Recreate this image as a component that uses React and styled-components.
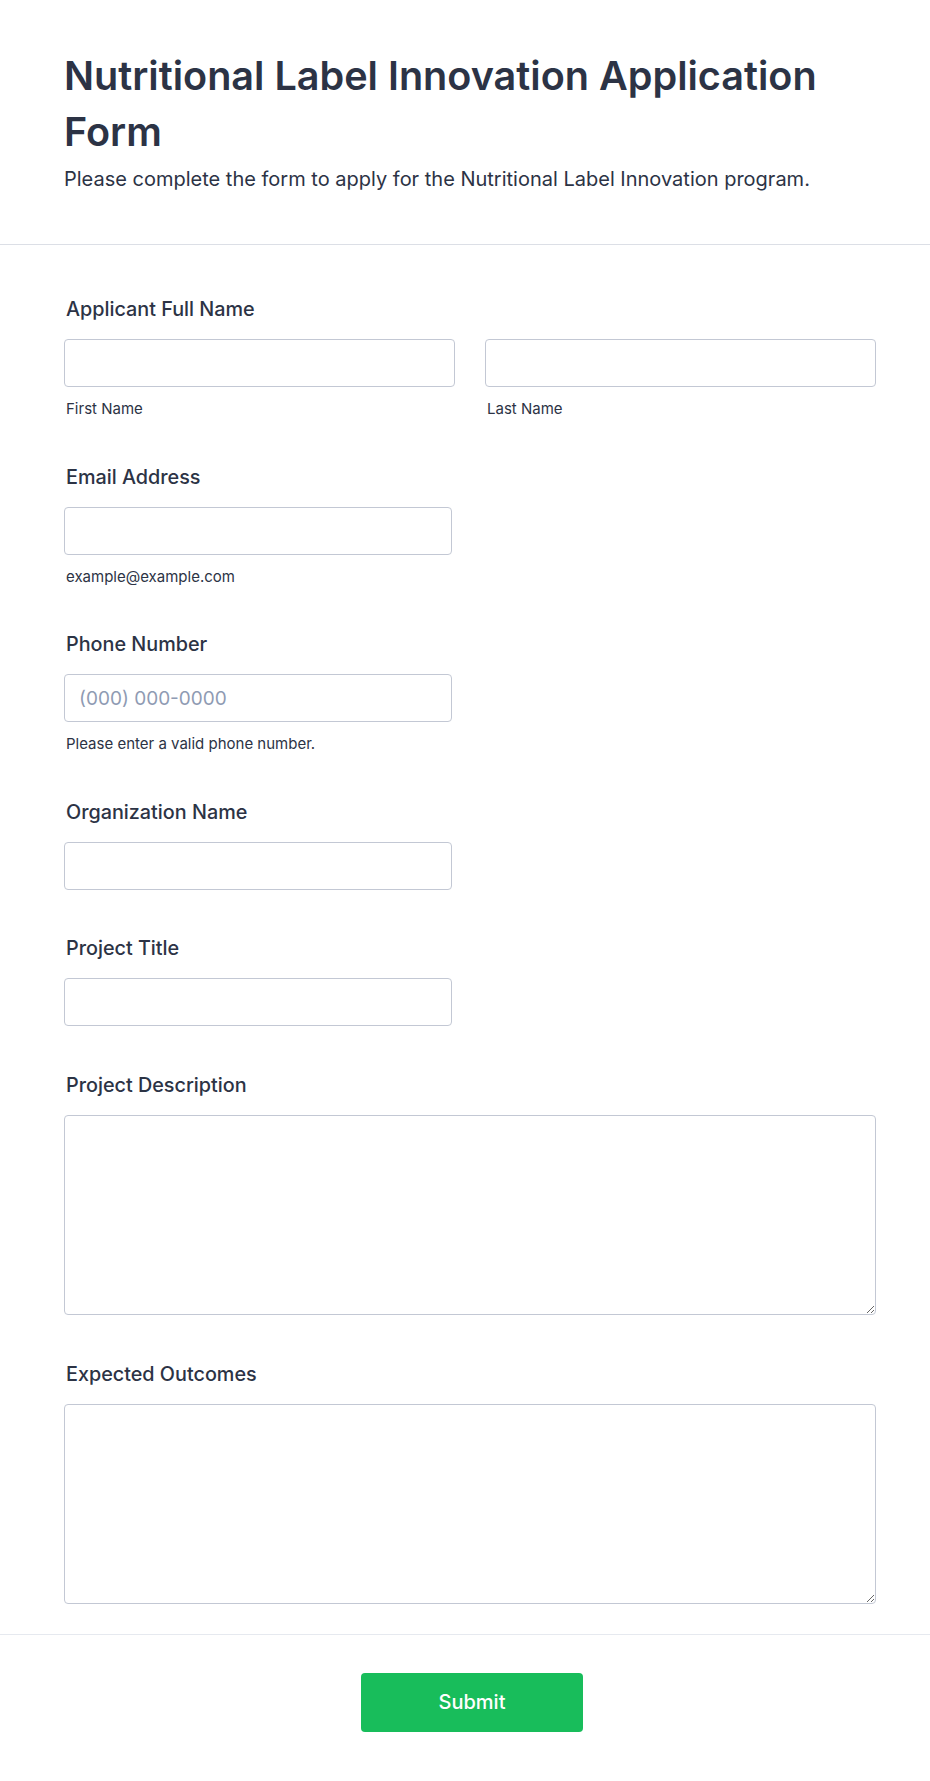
import React from "react";
import styled, { createGlobalStyle } from "styled-components";

const GlobalStyle = createGlobalStyle`
  * { box-sizing: border-box; }
  html, body { margin: 0; padding: 0; background: #ffffff; }
  body { font-family: Inter, "Noto Sans", sans-serif; color: #2c3345; }
`;

const Page = styled.div`
  width: 930px;
  background: #ffffff;
`;

const Header = styled.header`
  padding: 48px 54px 50px 64px;
  border-bottom: 1px solid #dcdfe6;
`;

const Title = styled.h1`
  margin: 0;
  font-size: 39.6px;
  line-height: 56px;
  font-weight: 600;
  color: #2c3345;
`;

const Subtitle = styled.p`
  margin: 4px 0 0;
  font-size: 20px;
  line-height: 30px;
  font-weight: 400;
  color: #2c3345;
`;

const Body = styled.main`
  padding: 50px 54px 30px 64px;
  display: flex;
  flex-direction: column;
  gap: 44.6px;
`;

const Field = styled.div`
  display: flex;
  flex-direction: column;
`;

const Label = styled.label`
  font-size: 19.8px;
  line-height: 28px;
  font-weight: 500;
  color: #2c3345;
  padding-left: 2px;
  margin-bottom: 16px;
`;

const Row = styled.div`
  display: grid;
  grid-template-columns: ${(p) => (p.$cols === 2 ? "1fr 1fr" : "388px")};
  column-gap: 30px;
`;

const Cell = styled.div`
  display: flex;
  flex-direction: column;
`;

const Input = styled.input`
  height: 48px;
  width: 100%;
  border: 1px solid #c3c8d4;
  border-radius: 4px;
  padding: 0 14px;
  font-family: Inter, "Noto Sans", sans-serif;
  font-size: 19px;
  color: #2c3345;
  background: #ffffff;
  outline: none;
  &::placeholder { color: #8f9bb3; }
`;

const TextArea = styled.textarea`
  height: 200px;
  width: 100%;
  border: 1px solid #c3c8d4;
  border-radius: 4px;
  padding: 10px 14px;
  font-family: Inter, "Noto Sans", sans-serif;
  font-size: 19px;
  color: #2c3345;
  background: #ffffff;
  outline: none;
  resize: vertical;
  display: block;
`;

const SubLabel = styled.span`
  margin-top: 13px;
  font-size: 15px;
  line-height: 18px;
  color: #2c3345;
  padding-left: 2px;
`;

const Footer = styled.footer`
  border-top: 1px solid #e6e9ef;
  padding: 38px 54px 50px 68px;
  display: flex;
  justify-content: center;
`;

const SubmitButton = styled.button`
  width: 222px;
  height: 59px;
  border: none;
  border-radius: 4px;
  background: #18bd5b;
  color: #ffffff;
  font-family: Inter, "Noto Sans", sans-serif;
  font-size: 20px;
  font-weight: 500;
  cursor: pointer;
`;

function SingleField({ label, sub, placeholder }) {
  return (
    <Field>
      <Label>{label}</Label>
      <Row $cols={1}>
        <Cell>
          <Input placeholder={placeholder} />
          {sub && <SubLabel>{sub}</SubLabel>}
        </Cell>
      </Row>
    </Field>
  );
}

function AreaField({ label }) {
  return (
    <Field>
      <Label>{label}</Label>
      <TextArea />
    </Field>
  );
}

export default function App() {
  return (
    <Page>
      <GlobalStyle />
      <Header>
        <Title>Nutritional Label Innovation Application Form</Title>
        <Subtitle>
          Please complete the form to apply for the Nutritional Label Innovation program.
        </Subtitle>
      </Header>
      <Body>
        <Field>
          <Label>Applicant Full Name</Label>
          <Row $cols={2}>
            <Cell>
              <Input />
              <SubLabel>First Name</SubLabel>
            </Cell>
            <Cell>
              <Input />
              <SubLabel>Last Name</SubLabel>
            </Cell>
          </Row>
        </Field>
        <SingleField label="Email Address" sub="example@example.com" />
        <SingleField
          label="Phone Number"
          sub="Please enter a valid phone number."
          placeholder="(000) 000-0000"
        />
        <SingleField label="Organization Name" />
        <SingleField label="Project Title" />
        <AreaField label="Project Description" />
        <AreaField label="Expected Outcomes" />
      </Body>
      <Footer>
        <SubmitButton type="button">Submit</SubmitButton>
      </Footer>
    </Page>
  );
}
